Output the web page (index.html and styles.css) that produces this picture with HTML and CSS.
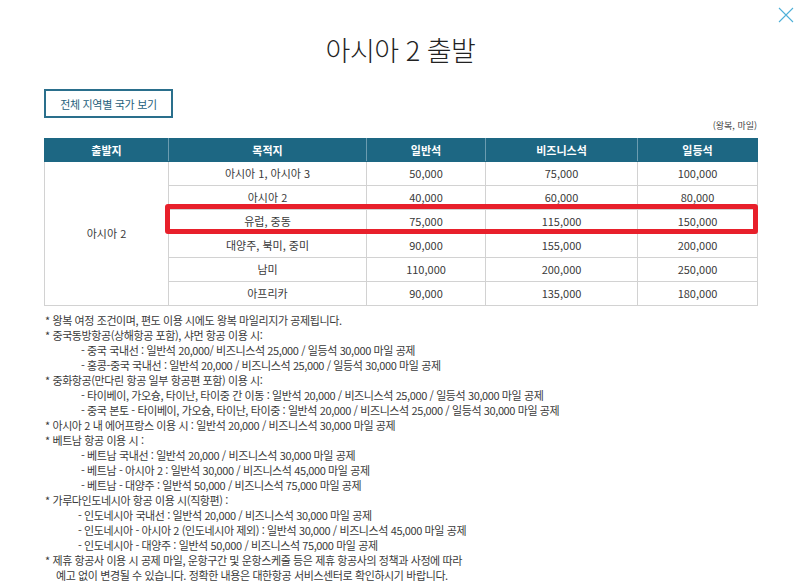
FILE: index.html
```html
<!DOCTYPE html>
<html lang="ko">
<head>
<meta charset="utf-8">
<link rel="stylesheet" href="styles.css">
</head>
<body>
<div class="page">
  <button class="close" aria-label="닫기">
    <svg width="16" height="16" viewBox="0 0 16 16"><path d="M1 1L15 15M15 1L1 15" stroke="#4fb0d8" stroke-width="1.1" fill="none"/></svg>
  </button>
  <h1 class="title">아시아 2 출발</h1>
  <div class="actions"><a class="btn">전체 지역별 국가 보기</a></div>
  <div class="unit">(왕복, 마일)</div>
  <div class="table-wrap">
    <table class="miles">
      <colgroup>
        <col class="c1"><col class="c2"><col class="c3"><col class="c4"><col class="c5">
      </colgroup>
      <thead>
        <tr><th>출발지</th><th>목적지</th><th>일반석</th><th>비즈니스석</th><th>일등석</th></tr>
      </thead>
      <tbody>
        <tr><td rowspan="6">아시아 2</td><td>아시아 1, 아시아 3</td><td>50,000</td><td>75,000</td><td>100,000</td></tr>
        <tr><td>아시아 2</td><td>40,000</td><td>60,000</td><td>80,000</td></tr>
        <tr><td>유럽, 중동</td><td>75,000</td><td>115,000</td><td>150,000</td></tr>
        <tr><td>대양주, 북미, 중미</td><td>90,000</td><td>155,000</td><td>200,000</td></tr>
        <tr><td>남미</td><td>110,000</td><td>200,000</td><td>250,000</td></tr>
        <tr><td>아프리카</td><td>90,000</td><td>135,000</td><td>180,000</td></tr>
      </tbody>
    </table>
    <div class="highlight"></div>
  </div>
  <ul class="notes">
    <li>* 왕복 여정 조건이며, 편도 이용 시에도 왕복 마일리지가 공제됩니다.</li>
    <li>* 중국동방항공(상해항공 포함), 샤먼 항공 이용 시:</li>
    <li class="sub">- 중국 국내선 : 일반석 20,000/ 비즈니스석 25,000 / 일등석 30,000 마일 공제</li>
    <li class="sub">- 홍콩-중국 국내선 : 일반석 20,000 / 비즈니스석 25,000 / 일등석 30,000 마일 공제</li>
    <li>* 중화항공(만다린 항공 일부 항공편 포함) 이용 시:</li>
    <li class="sub">- 타이베이, 가오슝, 타이난, 타이중 간 이동 : 일반석 20,000 / 비즈니스석 25,000 / 일등석 30,000 마일 공제</li>
    <li class="sub">- 중국 본토 - 타이베이, 가오슝, 타이난, 타이중 : 일반석 20,000 / 비즈니스석 25,000 / 일등석 30,000 마일 공제</li>
    <li>* 아시아 2 내 에어프랑스 이용 시 : 일반석 20,000 / 비즈니스석 30,000 마일 공제</li>
    <li>* 베트남 항공 이용 시 :</li>
    <li class="sub">- 베트남 국내선 : 일반석 20,000 / 비즈니스석 30,000 마일 공제</li>
    <li class="sub">- 베트남 - 아시아 2 : 일반석 30,000 / 비즈니스석 45,000 마일 공제</li>
    <li class="sub">- 베트남 - 대양주 : 일반석 50,000 / 비즈니스석 75,000 마일 공제</li>
    <li>* 가루다인도네시아 항공 이용 시(직항편) :</li>
    <li class="sub sub2">- 인도네시아 국내선 : 일반석 20,000 / 비즈니스석 30,000 마일 공제</li>
    <li class="sub sub2">- 인도네시아 - 아시아 2 (인도네시아 제외) : 일반석 30,000 / 비즈니스석 45,000 마일 공제</li>
    <li class="sub sub2">- 인도네시아 - 대양주 : 일반석 50,000 / 비즈니스석 75,000 마일 공제</li>
    <li>* 제휴 항공사 이용 시 공제 마일, 운항구간 및 운항스케줄 등은 제휴 항공사의 정책과 사정에 따라</li>
    <li class="cont">예고 없이 변경될 수 있습니다. 정확한 내용은 대한항공 서비스센터로 확인하시기 바랍니다.</li>
  </ul>
</div>
</body>
</html>
```

FILE: styles.css
```css
* { box-sizing: border-box; }
html, body { margin: 0; padding: 0; background: #fff; }
body {
  font-family: "Noto Sans CJK KR", "Noto Sans", sans-serif;
  color: #333;
  width: 800px;
  height: 582px;
  overflow: hidden;
}
.page {
  position: relative;
  padding: 0 43px 0 44px;
}
.close {
  position: absolute;
  top: 7px;
  right: 6px;
  width: 16px;
  height: 16px;
  padding: 0;
  border: 0;
  background: none;
  display: flex;
}
.title {
  margin: 0;
  padding-top: 30px;
  height: 89px;
  text-align: center;
  font-size: 27px;
  font-weight: 300;
  color: #222;
  line-height: 40px;
  letter-spacing: -0.5px;
}
.actions { display: flex; }
.btn {
  display: flex;
  align-items: center;
  justify-content: center;
  width: 129px;
  height: 29px;
  border: 2px solid #2a6f8c;
  color: #1f5f7c;
  font-size: 11px;
  letter-spacing: -0.3px;
}
.unit {
  text-align: right;
  font-size: 9px;
  color: #444;
  line-height: 14px;
  margin-top: 1px;
  height: 19px;
}
.table-wrap { position: relative; }
.miles {
  width: 713px;
  border-collapse: collapse;
  table-layout: fixed;
  font-size: 11px;
}
.c1 { width: 124px; }
.c2 { width: 198px; }
.c3 { width: 119px; }
.c4 { width: 152px; }
.c5 { width: 120px; }
.miles th {
  background: #1d6783;
  color: #fff;
  font-weight: 700;
  height: 23px;
  padding: 0;
  border: 1px solid #1d6783;
  border-left-color: #6b9cb0;
  border-right-color: #6b9cb0;
  line-height: 1;
}
.miles th:first-child { border-left-color: #1d6783; }
.miles th:last-child { border-right-color: #1d6783; }
.miles td {
  height: 24px;
  padding: 0;
  text-align: center;
  border: 1px solid #d2d2d2;
  color: #3a3a3a;
  line-height: 1;
}
.highlight {
  position: absolute;
  left: 121px;
  top: 66px;
  width: 593px;
  height: 30px;
  border: 5px solid #e8202b;
  border-radius: 3px;
}
.notes {
  list-style: none;
  margin: 7px 0 0;
  padding: 0 0 0 1px;
  font-size: 11px;
  line-height: 15px;
  color: #3a3a3a;
  letter-spacing: -0.4px;
}
.notes .sub { padding-left: 36px; }
.notes .sub2 { padding-left: 33px; }
.notes .cont { padding-left: 11px; }
```
